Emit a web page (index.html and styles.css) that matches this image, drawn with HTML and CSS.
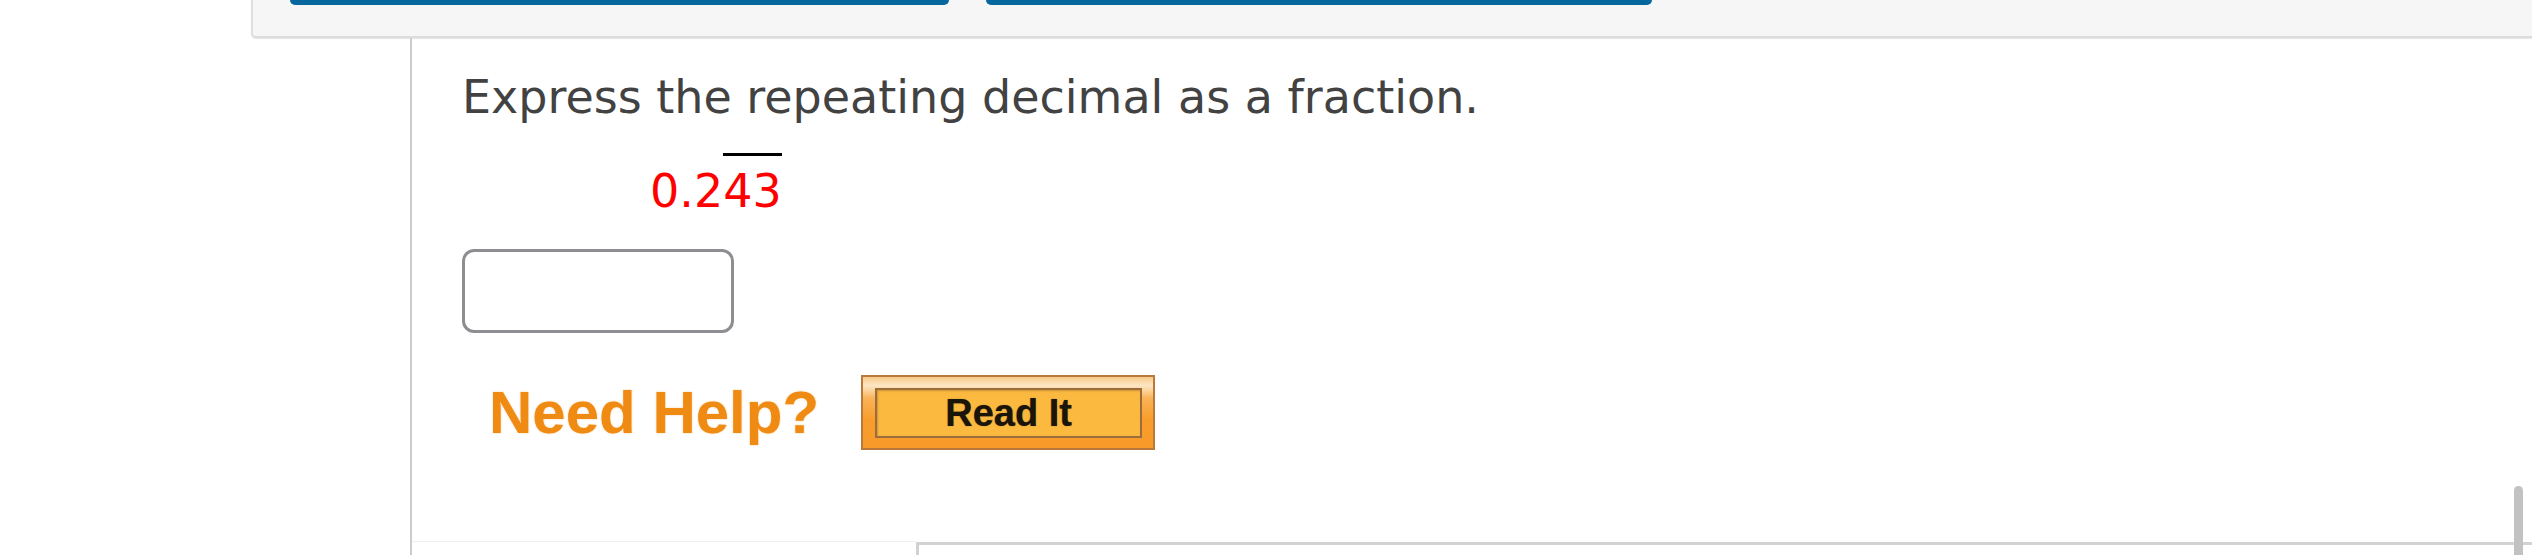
FILE: index.html
```html
<!DOCTYPE html>
<html lang="en">
<head>
<meta charset="utf-8">
<title>Repeating decimal</title>
<link rel="stylesheet" href="styles.css">
</head>
<body>
<div class="toolbar">
  <div class="tb-btn tb-btn-1"></div>
  <div class="tb-btn tb-btn-2"></div>
</div>
<div class="main">
  <div class="question">
    <p class="prompt">Express the repeating decimal as a fraction.</p>
    <p class="decimal">0.2<span class="repeat">43</span></p>
    <input class="answer" type="text" aria-label="answer">
    <div class="help">
      <span class="need-help">Need Help?</span>
      <button class="read-it" type="button"><span class="read-it-inner">Read It</span></button>
    </div>
  </div>
  <div class="footer">
    <div class="footer-left"></div>
    <div class="footer-right"></div>
  </div>
</div>
<div class="scrollbar"></div>
</body>
</html>
```
FILE: styles.css
```css
html, body {
  margin: 0;
  padding: 0;
}
body {
  width: 2532px;
  height: 555px;
  overflow: hidden;
  background: #ffffff;
  position: relative;
  font-family: "DejaVu Sans", Verdana, sans-serif;
}
.toolbar {
  margin-left: 251px;
  height: 36px;
  background: #f6f6f6;
  border-left: 2px solid #e0e0e0;
  border-bottom: 2px solid #dcdcdc;
  border-bottom-left-radius: 5px;
  box-shadow: 0 1px 1px #e6e6e6;
  display: flex;
  gap: 37px;
  padding-left: 37px;
}
.tb-btn {
  height: 5px;
  background: #06679f;
  border-radius: 0 0 6px 6px;
}
.tb-btn-1 { width: 659px; }
.tb-btn-2 { width: 666px; }

.main {
  margin-left: 410px;
  border-left: 2px solid #cccccc;
}
.question {
  padding-left: 50px;
  padding-top: 32px;
}
.prompt {
  margin: 0;
  font-size: 46px;
  line-height: 54px;
  color: #424242;
  white-space: nowrap;
}
.decimal {
  margin: 29px 0 0 0;
  padding-left: 188px;
  font-size: 46px;
  line-height: 54px;
  color: #ff0000;
}
.repeat {
  display: inline-block;
  border-top: 3px solid #000000;
  padding-top: 8px;
  line-height: 54px;
}
.answer {
  display: block;
  margin: 31px 0 0 0;
  box-sizing: border-box;
  width: 272px;
  height: 84px;
  border: 3px solid #8e8e92;
  border-radius: 12px;
  background: #ffffff;
  padding: 0 12px;
  font: 46px "DejaVu Sans", sans-serif;
}
.help {
  margin-top: 42px;
  display: flex;
  align-items: center;
  padding-left: 27px;
  gap: 42px;
}
.need-help {
  font-family: "Liberation Sans", Arial, sans-serif;
  font-weight: bold;
  font-size: 60px;
  line-height: 69px;
  color: #ef8a12;
  text-shadow: 0 0 2px rgba(239, 138, 18, 0.45);
}
.read-it {
  box-sizing: border-box;
  width: 294px;
  height: 75px;
  margin: 0;
  padding: 11px 11px 10px 12px;
  border: 2px solid #b9793a;
  background: linear-gradient(#f9c98a 0%, #fde6c4 12%, #f9b358 30%, #f89d2c 60%, #f79a2a 100%);
  display: flex;
  cursor: pointer;
}
.read-it-inner {
  flex: 1;
  box-sizing: border-box;
  border: 2px solid #9c6c3c;
  background: #fbb940;
  display: flex;
  align-items: center;
  justify-content: center;
  font-family: "Liberation Sans", Arial, sans-serif;
  font-weight: bold;
  font-size: 38px;
  color: #1a1409;
  text-shadow: 0 0 1px rgba(26, 20, 9, 0.6);
  box-shadow: inset 1px 1px 2px rgba(120, 80, 30, 0.35);
}
.footer {
  margin-top: 91px;
  display: flex;
  height: 30px;
}
.footer-left {
  width: 504px;
  border-top: 1px solid #efefef;
}
.footer-right {
  flex: 1;
  margin-top: 1px;
  border-top: 3px solid #d2d2d2;
  border-left: 3px solid #d2d2d2;
}
.scrollbar {
  position: absolute;
  left: 2514px;
  top: 486px;
  width: 9px;
  height: 80px;
  background: #c2c2c2;
  border-radius: 5px 5px 0 0;
}
```
